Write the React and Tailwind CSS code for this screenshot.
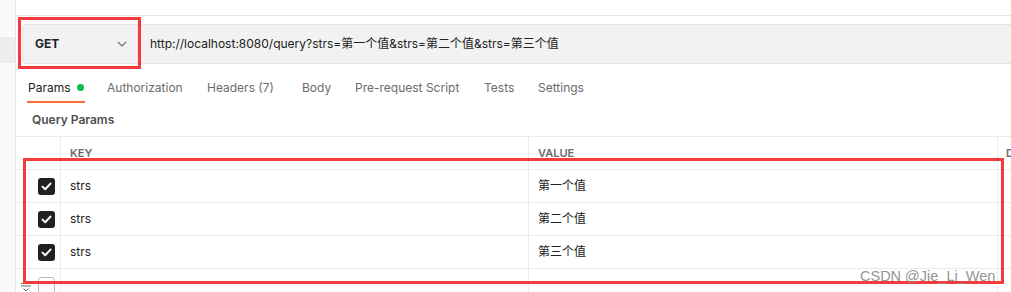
import React from "react";

const font = { fontFamily: 'Inter, "Noto Sans CJK SC", sans-serif' };

function Check({ checked }) {
  if (!checked)
    return <div className="w-[17px] h-[17px] rounded-[3px] border border-[#b8b8b8] bg-white" />;
  return (
    <div className="w-[17px] h-[17px] rounded-[3px] bg-[#212121] flex items-center justify-center">
      <svg width="11" height="9" viewBox="0 0 11 9">
        <path d="M1.5 4.6 L4.2 7.2 L9.5 1.6" fill="none" stroke="#fff" strokeWidth="2" strokeLinecap="round" strokeLinejoin="round" />
      </svg>
    </div>
  );
}

function Row({ k, v, checked, last }) {
  return (
    <div className="flex h-[33px] shrink-0 border-b border-[#ebebeb]">
      <div className="w-[45px] flex items-center justify-end pr-[5px] border-r border-[#ebebeb] relative">
        {last && (
          <svg className="absolute left-[4px] top-[13px]" width="12" height="10" viewBox="0 0 12 10">
            <path d="M1 1.5 H11 M1 4 H11" stroke="#6b6b6b" strokeWidth="1" />
            <path d="M3.5 6.5 L6 9 L8.5 6.5" fill="none" stroke="#6b6b6b" strokeWidth="1" />
          </svg>
        )}
        <Check checked={checked} />
      </div>
      <div className="w-[468px] pl-[9px] flex items-center text-[12px] text-[#212121] border-r border-[#ebebeb]">{k}</div>
      <div className="w-[469px] pl-[9px] flex items-center text-[12px] text-[#212121] border-r border-[#ebebeb]">{v}</div>
      <div className="flex-1" />
    </div>
  );
}

export default function App() {
  return (
    <div className="w-[1011px] h-[292px] relative overflow-hidden bg-white flex" style={font}>
      <div className="w-[16px] shrink-0 bg-[#fafafa] border-r border-[#e6e6e6] pt-[37px]">
        <div className="h-[26px] bg-[#ededed]" />
      </div>
      <div className="flex-1 flex flex-col">
        <div className="h-[16px] border-b border-[#e6e6e6] shrink-0" />
        <div className="flex h-[40px] mt-[8px] ml-[6px] shrink-0">
          <div className="w-[116px] bg-[#f2f2f2] border border-[#e3e3e3] rounded-l-[4px] flex items-center justify-between pl-[12px] pr-[10px]">
            <span className="text-[12px] font-bold text-[#212121]">GET</span>
            <svg width="10" height="6" viewBox="0 0 10 6">
              <path d="M1 1 L5 5 L9 1" fill="none" stroke="#6b6b6b" strokeWidth="1.1" />
            </svg>
          </div>
          <div className="flex-1 bg-[#f2f2f2] border-y border-[#e3e3e3] ml-[2px] flex items-center pl-[10px] text-[12px] text-[#212121]">
            http://localhost:8080/query?strs=第一个值&amp;strs=第二个值&amp;strs=第三个值
          </div>
        </div>
        <div className="flex pl-[12px] h-[40px] pt-[7px] shrink-0 text-[12px] text-[#6b6b6b]">
          <div className="w-[79px] flex">
            <div className="relative flex items-center gap-[6px] text-[#212121] pr-[1px]">
              <span>Params</span>
              <span className="w-[7px] h-[7px] rounded-full bg-[#0cbb52]" />
              <div className="absolute left-[-1px] right-0 bottom-[1px] h-[2px] bg-[#ff6c37]" />
            </div>
          </div>
          <div className="w-[100px] flex items-center">Authorization</div>
          <div className="w-[95px] flex items-center">Headers (7)</div>
          <div className="w-[53px] flex items-center">Body</div>
          <div className="w-[129px] flex items-center">Pre-request Script</div>
          <div className="w-[54px] flex items-center">Tests</div>
          <div className="flex items-center">Settings</div>
        </div>
        <div className="h-[33px] flex items-center pl-[16px] text-[12px] font-semibold text-[#505050] border-b border-[#ebebeb] shrink-0">
          Query Params
        </div>
        <div className="flex h-[33px] border-b border-[#ebebeb] shrink-0">
          <div className="w-[45px] border-r border-[#ebebeb]" />
          <div className="w-[468px] pl-[9px] pt-[8px] text-[11px] font-semibold text-[#6b6b6b] border-r border-[#ebebeb]">KEY</div>
          <div className="w-[469px] pl-[9px] pt-[8px] text-[11px] font-semibold text-[#6b6b6b] border-r border-[#ebebeb]">VALUE</div>
          <div className="flex-1 pl-[8px] pt-[8px] text-[11px] font-semibold text-[#6b6b6b]">D</div>
        </div>
        <Row k="strs" v="第一个值" checked />
        <Row k="strs" v="第二个值" checked />
        <Row k="strs" v="第三个值" checked />
        <Row k="" v="" last />
      </div>

      <div className="absolute left-[18px] top-[17px] w-[123px] h-[52px] border-[3px] border-[#f43b3b] pointer-events-none" />
      <div className="absolute left-[23px] top-[158px] w-[981px] h-[126px] border-[3px] border-[#f43b3b] pointer-events-none" />
      <div
        className="absolute left-[860px] top-[266px] text-[14.5px] text-[#8a8a8a] opacity-90"
        style={{ fontFamily: '"Liberation Sans", Arial, sans-serif' }}
      >
        CSDN @Jie_Li_Wen
      </div>
    </div>
  );
}
